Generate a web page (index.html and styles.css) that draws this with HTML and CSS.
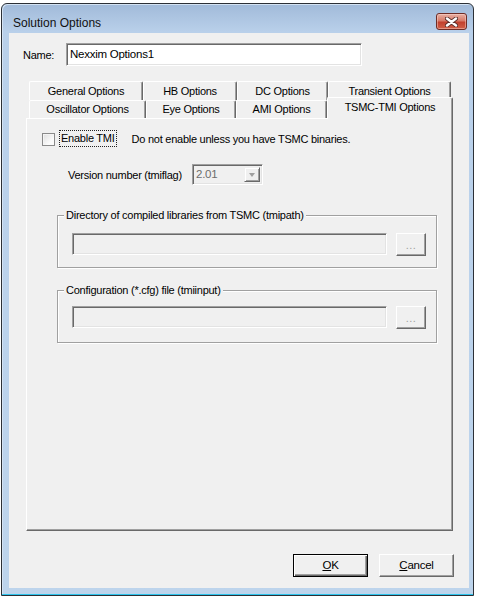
FILE: index.html
```html
<!DOCTYPE html>
<html>
<head>
<meta charset="utf-8">
<title>Solution Options</title>
<link rel="stylesheet" href="styles.css">
</head>
<body>
<div class="window">
  <div class="titlebar">
    <span class="title">Solution Options</span>
    <div class="close">
      <svg width="13" height="10" viewBox="0 0 13 10">
        <path d="M2 1.5 L11 8.5 M11 1.5 L2 8.5" stroke="#5a2e2a" stroke-width="4.2" stroke-linecap="round"/>
        <path d="M2 1.5 L11 8.5 M11 1.5 L2 8.5" stroke="#ffffff" stroke-width="2.4" stroke-linecap="round"/>
      </svg>
    </div>
  </div>
  <div class="client">
    <div class="name-row">
      <span class="name-label">Name:</span>
      <div class="field name-field">Nexxim Options1</div>
    </div>
    <div class="tabs">
      <div class="tab-row back">
        <div class="tab w-general">General Options</div>
        <div class="tab w-hb">HB Options</div>
        <div class="tab w-dc">DC Options</div>
        <div class="tab w-trans">Transient Options</div>
      </div>
      <div class="tab-row front">
        <div class="tab w-osc">Oscillator Options</div>
        <div class="tab w-eye">Eye Options</div>
        <div class="tab w-ami">AMI Options</div>
        <div class="tab sel w-tsmc">TSMC-TMI Options</div>
      </div>
    </div>
    <div class="panel">
      <div class="check-row">
        <span class="checkbox"></span>
        <span class="check-label">Enable TMI</span>
        <span class="note">Do not enable unless you have TSMC binaries.</span>
      </div>
      <div class="version-row">
        <span class="version-label">Version number (tmiflag)</span>
        <div class="combo">
          <span class="combo-text">2.01</span>
          <span class="drop"><span class="arrow"></span></span>
        </div>
      </div>
      <fieldset class="group g1">
        <legend>Directory of compiled libraries from TSMC (tmipath)</legend>
        <div class="path-row">
          <div class="field path-field"></div>
          <div class="browse">...</div>
        </div>
      </fieldset>
      <fieldset class="group g2">
        <legend>Configuration (*.cfg) file (tmiinput)</legend>
        <div class="path-row">
          <div class="field path-field"></div>
          <div class="browse">...</div>
        </div>
      </fieldset>
    </div>
    <div class="buttons">
      <div class="btn default"><u>O</u>K</div>
      <div class="btn"><u>C</u>ancel</div>
    </div>
  </div>
</div>
</body>
</html>
```

FILE: styles.css
```css
html, body {
  margin: 0;
  padding: 0;
  background: #ffffff;
}
body {
  font-family: "Liberation Sans", Arial, sans-serif;
  font-size: 11px;
  letter-spacing: -0.25px;
  color: #000;
}
.window {
  margin: 3px 0 0 1px;
  width: 473px;
  height: 593px;
  box-sizing: border-box;
  border: 1px solid #2c3036;
  border-radius: 6px 6px 0 0;
  background: linear-gradient(#a1bad9, #b9d0ea 28px, #bdd4ec);
  box-shadow: inset 0 -1px 0 #2cc4ec, inset 1px 1px 0 #d4e3f3;
  display: flex;
  flex-direction: column;
}
.titlebar {
  height: 29px;
  display: flex;
  align-items: flex-start;
  padding-left: 11px;
}
.title {
  font-size: 12px;
  letter-spacing: 0;
  line-height: 14px;
  margin-top: 12px;
  color: #111;
}
.close {
  margin-left: auto;
  margin-top: 9px;
  margin-right: 6px;
  width: 31px;
  height: 17px;
  box-sizing: border-box;
  border: 1px solid #6e2d26;
  border-radius: 3px;
  background: linear-gradient(#e8b0a4, #d77a68 45%, #c2412e 55%, #d06048);
  box-shadow: inset 0 0 0 1px rgba(255,220,210,0.45);
  display: flex;
  align-items: center;
  justify-content: center;
}
.client {
  margin: 0 4px 0 7px;
  height: 555px;
  background: #f0f0f0;
  display: flex;
  flex-direction: column;
}
.name-row {
  display: flex;
  align-items: center;
  padding: 10px 0 0 14px;
  height: 23px;
}
.name-label {
  width: 43px;
}
.field {
  box-sizing: border-box;
  border: 1px solid;
  border-color: #a0a0a0 #ffffff #ffffff #a0a0a0;
  box-shadow: inset 1px 1px 0 #696969, inset -1px -1px 0 #e3e3e3;
}
.name-field {
  width: 296px;
  height: 23px;
  background: #fff;
  padding: 0 3px;
  line-height: 21px;
  font-size: 11.5px;
}
.tabs {
  margin-top: 15px;
  padding-left: 20px;
}
.tab-row {
  display: flex;
  align-items: flex-start;
}
.tab-row.back {
  height: 19px;
}
.tab-row.front {
  height: 18px;
}
.tab {
  box-sizing: border-box;
  text-align: center;
  border-top: 1px solid #fff;
  border-left: 1px solid #fff;
  border-right: 1px solid #696969;
  border-radius: 2px 2px 0 0;
  box-shadow: inset -1px 0 0 #a0a0a0;
  background: #f0f0f0;
}
.back .tab {
  height: 19px;
  line-height: 18px;
}
.front .tab {
  height: 18px;
  line-height: 17px;
}
.front .tab.sel {
  position: relative;
  z-index: 2;
  margin-top: -3px;
  height: 22px;
  line-height: 18px;
}
.w-general { width: 114px; }
.w-hb { width: 94px; }
.w-dc { width: 91px; }
.w-trans { width: 123px; }
.w-osc { width: 117px; }
.w-eye { width: 90px; }
.w-ami { width: 91px; }
.w-tsmc { width: 126px; }
.panel {
  margin-left: 17px;
  width: 427px;
  height: 413px;
  box-sizing: border-box;
  border-top: 1px solid #fff;
  border-left: 1px solid #fff;
  border-right: 1px solid #696969;
  border-bottom: 1px solid #696969;
  box-shadow: inset -1px -1px 0 #a0a0a0;
  padding: 11px 0 0 15px;
}
.check-row {
  display: flex;
  align-items: center;
  height: 17px;
}
.checkbox {
  width: 13px;
  height: 13px;
  box-sizing: border-box;
  border: 1px solid #8a8a8a;
  background: linear-gradient(135deg, #dedede, #fbfbfb 70%);
  box-shadow: inset 1px 1px 0 #f4f4f4;
  margin-right: 4px;
  margin-top: 1px;
}
.check-label {
  border: 1px dotted #222;
  padding: 0 1px;
  line-height: 15px;
}
.note {
  margin-left: 15px;
}
.version-row {
  display: flex;
  align-items: center;
  margin-top: 17px;
  padding-left: 26px;
}
.version-label {
  width: 124px;
}
.combo {
  width: 71px;
  height: 21px;
  box-sizing: border-box;
  border: 1px solid;
  border-color: #a0a0a0 #ffffff #ffffff #a0a0a0;
  box-shadow: inset 1px 1px 0 #696969, inset -1px -1px 0 #e3e3e3;
  display: flex;
  align-items: flex-start;
}
.combo-text {
  color: #6d6d6d;
  padding-left: 3px;
  line-height: 19px;
  font-size: 11.5px;
}
.drop {
  margin: 2px 2px 0 auto;
  width: 16px;
  height: 15px;
  box-sizing: border-box;
  border: 1px solid;
  border-color: #f0f0f0 #696969 #696969 #f0f0f0;
  box-shadow: inset 1px 1px 0 #fff, inset -1px -1px 0 #a0a0a0;
  display: flex;
  align-items: center;
  justify-content: center;
}
.arrow {
  width: 0;
  height: 0;
  border-left: 3.5px solid transparent;
  border-right: 3.5px solid transparent;
  border-top: 4px solid #a0a0a0;
}
.group {
  box-sizing: border-box;
  width: 380px;
  margin: 23px 0 0 15px;
  padding: 11px 10px 11px 14px;
  border: 1px solid #a0a0a0;
  box-shadow: inset 1px 1px 0 #fff, 1px 1px 0 #fff;
  min-inline-size: 0;
}
.group.g2 {
  margin-top: 15px;
  padding-top: 9px;
  padding-bottom: 13px;
}
.group legend {
  padding: 0 2px;
  margin-left: -8px;
  line-height: 14px;
  background: #f0f0f0;
}
.path-row {
  display: flex;
  align-items: flex-start;
}
.path-field {
  width: 315px;
  height: 22px;
  background: #f0f0f0;
}
.browse {
  margin-left: 9px;
  width: 30px;
  height: 23px;
  box-sizing: border-box;
  border: 1px solid;
  border-color: #fff #696969 #696969 #fff;
  box-shadow: inset -1px -1px 0 #a0a0a0;
  color: #a0a0a0;
  text-align: center;
  line-height: 22px;
  letter-spacing: 0.5px;
}
.buttons {
  margin-top: 23px;
  display: flex;
  justify-content: flex-end;
  gap: 11px;
  padding-right: 15px;
}
.btn {
  width: 75px;
  height: 23px;
  box-sizing: border-box;
  border: 1px solid;
  border-color: #fff #696969 #696969 #fff;
  box-shadow: inset -1px -1px 0 #a0a0a0;
  background: #f0f0f0;
  text-align: center;
  line-height: 21px;
  font-size: 11.5px;
}
.btn.default {
  border: 1px solid #000;
  box-shadow: inset 1px 1px 0 #fff, inset -1px -1px 0 #696969, inset -2px -2px 0 #a0a0a0;
}
.btn u {
  text-decoration: underline;
  text-underline-offset: 1px;
}
```
